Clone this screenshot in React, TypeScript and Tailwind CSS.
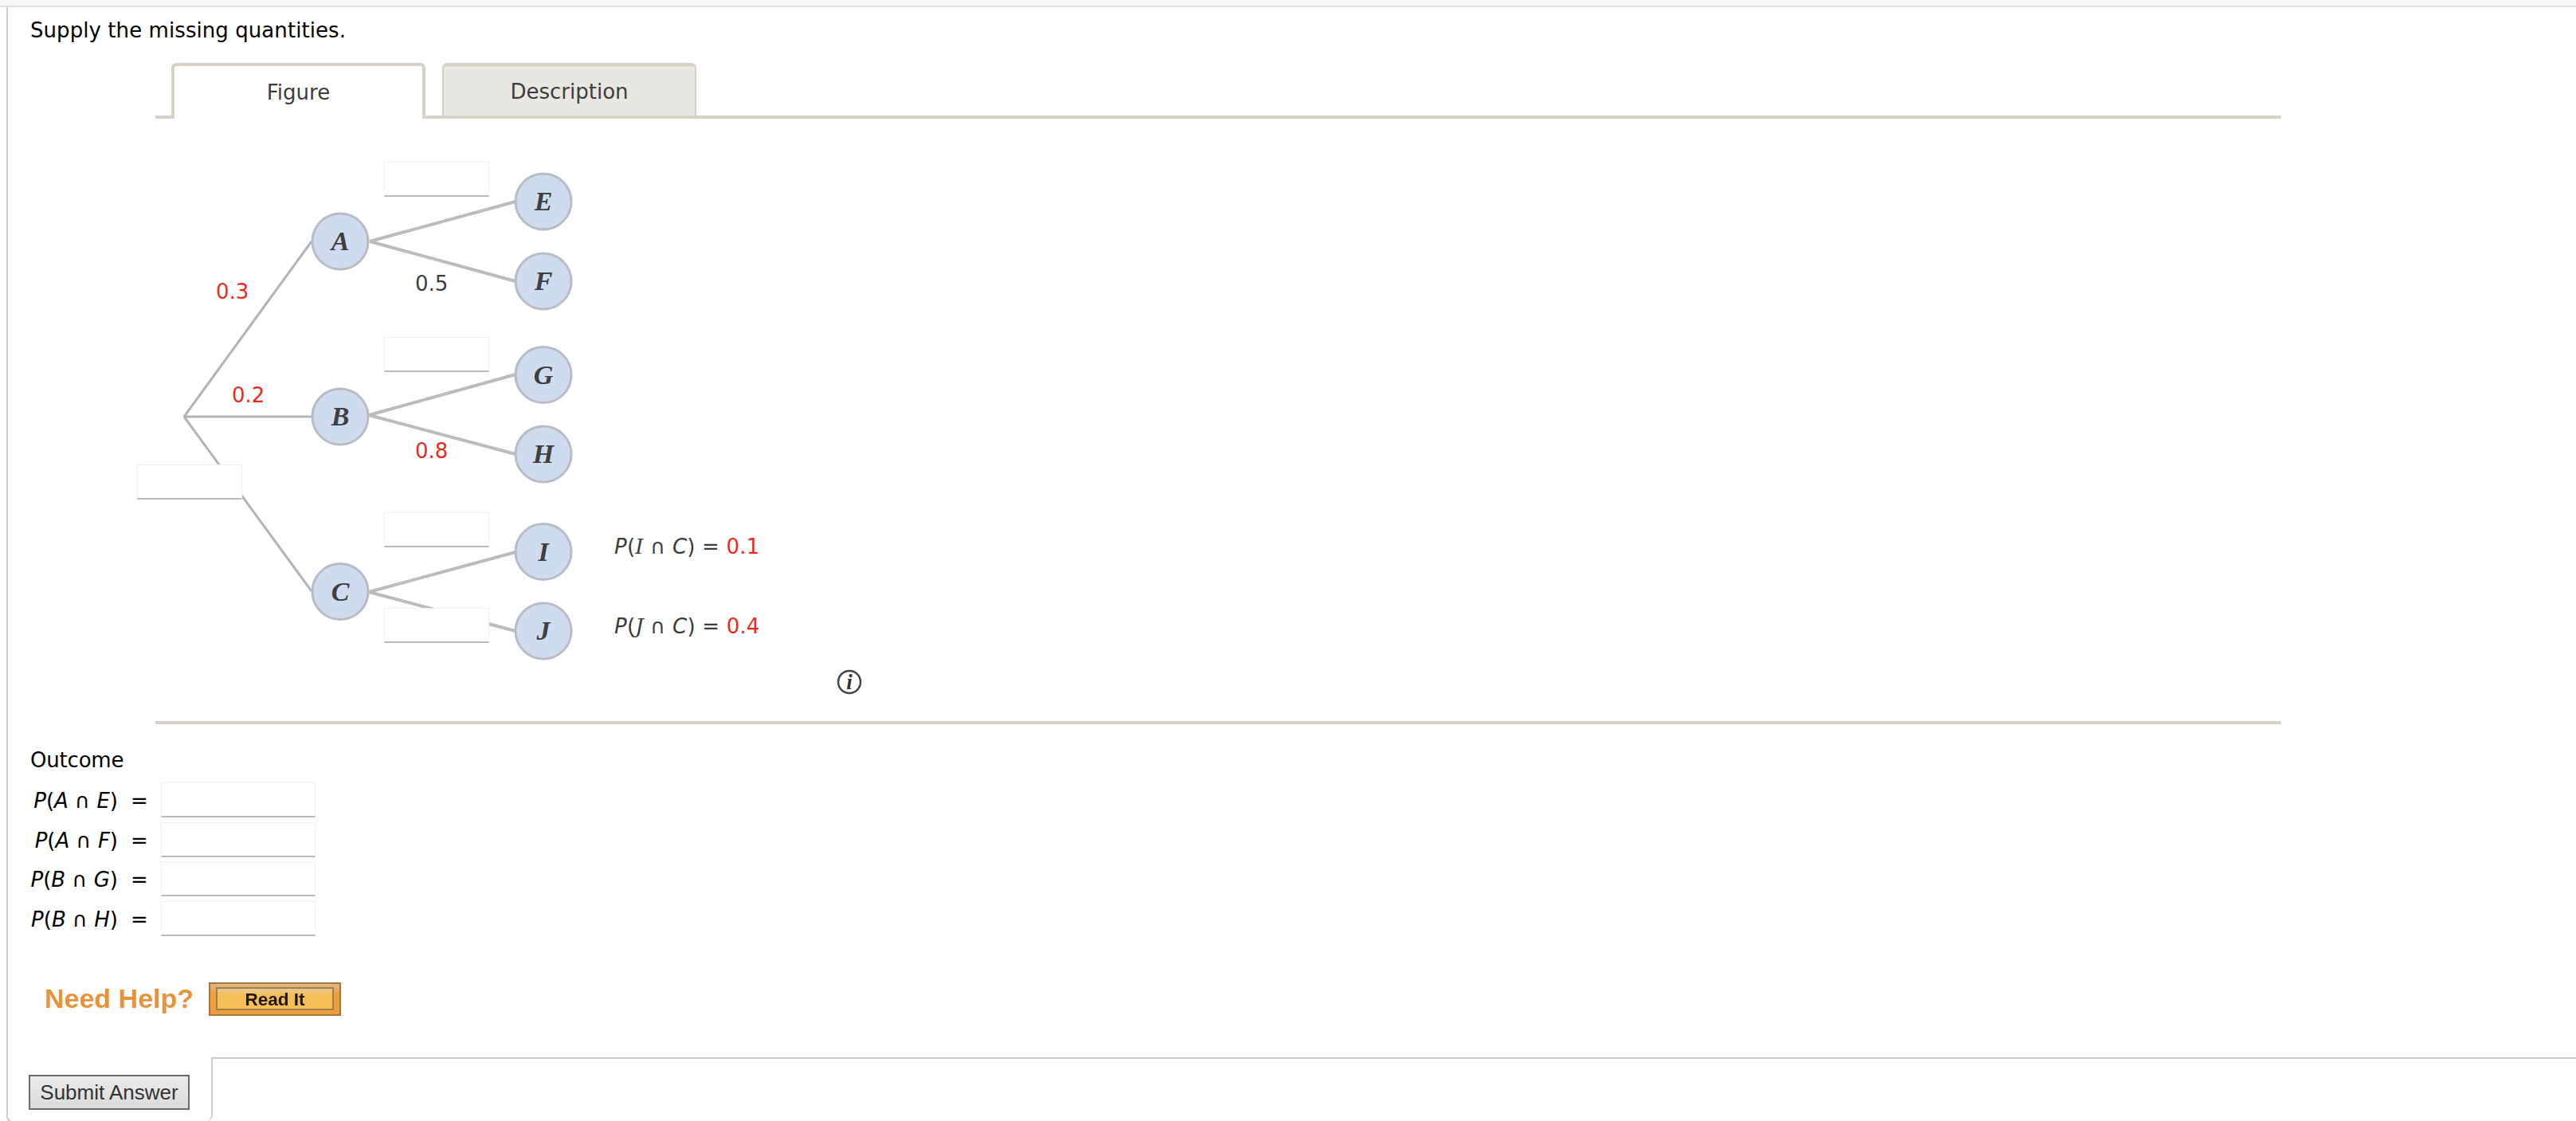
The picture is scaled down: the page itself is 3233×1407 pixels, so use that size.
import React from "react";

const inputCls =
  "absolute w-[132px] h-[44px] bg-white border border-[#f0f0f0] border-b-2 border-b-[#bbbbbb]";

const nodes: [string, number, number][] = [
  ["A", 427, 303],
  ["E", 682, 253],
  ["F", 682, 353],
  ["B", 427, 523],
  ["G", 682, 470.5],
  ["H", 682, 570],
  ["C", 427, 742.5],
  ["I", 682, 692.5],
  ["J", 682, 792],
];

const trunk: [number, number][] = [
  [391, 303],
  [391, 523],
  [391, 742],
];

const branches: [number, number, number, number][] = [
  [464, 303, 647, 253],
  [464, 303, 647, 353],
  [463, 521, 647, 470],
  [463, 521, 647, 570],
  [463, 743, 647, 693],
  [463, 743, 647, 792],
];

function Tree() {
  return (
    <svg
      className="absolute left-0 top-0 w-[1000px] h-[756px]"
      viewBox="195 149 1000 756"
    >
      {trunk.map(([x, y]) => (
        <line key={y} x1={231} y1={523} x2={x} y2={y} stroke="#b4b4b4" strokeWidth={3} />
      ))}
      {branches.map(([a, b, c, d], i) => (
        <line key={i} x1={a} y1={b} x2={c} y2={d} stroke="#bcbcbc" strokeWidth={4} />
      ))}
      {nodes.map(([t, x, y]) => (
        <g key={t}>
          <circle cx={x} cy={y} r={35} fill="#cfdcef" stroke="#b8bcc4" strokeWidth={3} />
          <text
            x={x}
            y={y + 11}
            textAnchor="middle"
            fontFamily="'Liberation Serif', serif"
            fontWeight="bold"
            fontStyle="italic"
            fontSize={34}
            fill="#3f3f3f"
          >
            {t}
          </text>
        </g>
      ))}
      <circle cx={1066} cy={856} r={14} fill="none" stroke="#444444" strokeWidth={2.5} />
      <text
        x={1066}
        y={865}
        textAnchor="middle"
        fontFamily="'Liberation Serif', serif"
        fontWeight="bold"
        fontStyle="italic"
        fontSize={27}
        fill="#333333"
      >
        i
      </text>
    </svg>
  );
}

function Joint({ a, b, red }: { a: string; b: string; red: string }) {
  return (
    <>
      <i>P</i>(<i className="font-['DejaVu_Serif',serif]">{a}</i> ∩ <i>{b}</i>) ={" "}
      <span className="text-[#ee2a1c]">{red}</span>
    </>
  );
}

function Row({ a, b }: { a: string; b: string }) {
  return (
    <div className="flex h-[44px] leading-[46px] text-black">
      <div className="w-[138px] text-right whitespace-pre">
        <i>P</i>(<i>{a}</i> ∩ <i>{b}</i>)
      </div>
      <div className="w-[38px] ml-[16px]">=</div>
      <input
        aria-label={`P(${a} ∩ ${b})`}
        className="w-[194px] h-[44px] bg-white border border-[#f0f0f0] border-b-2 border-b-[#bbbbbb]"
      />
    </div>
  );
}

export default function App() {
  return (
    <div className="w-[3233px] h-[1407px] overflow-hidden bg-white font-['DejaVu_Sans',sans-serif] text-[26px]">
      <div className="h-[9px] bg-[#f7f7f7] border-b-2 border-[#e0e0e0]" />
      <div className="ml-[8px] h-[1400px] border-l-2 border-b-2 border-[#cccccc] rounded-bl-[8px]">
        <div className="pt-[11px] pl-[28px] leading-[36px] text-black tracking-[0.07px]">
          Supply the missing quantities.
        </div>

        <div className="mt-[23px] ml-[185px] w-[2668px] h-[70px] border-b-4 border-[#d6d2c8] flex items-start pl-[20px] gap-[21px] text-[#3d3d3d]">
          <div className="w-[319px] h-[70px] bg-white border-x-4 border-t-4 border-[#d6d2c8] rounded-t-[6px] text-center pt-[1px] leading-[64px]">
            Figure
          </div>
          <div className="w-[319px] h-[66px] bg-[#e8e7e2] border-x-2 border-t-4 border-[#d6d2c8] rounded-t-[6px] text-center pt-[2px] leading-[60px]">
            Description
          </div>
        </div>

        <div className="relative ml-[185px] w-[2668px] h-[760px] border-b-4 border-[#d6d2c8] leading-[36px] text-[#3d3d3d]">
          <Tree />
          <input aria-label="A E" className={`${inputCls} left-[287px] top-[54px]`} />
          <input aria-label="B G" className={`${inputCls} left-[287px] top-[274px]`} />
          <input aria-label="C" className={`${inputCls} left-[-23px] top-[434px]`} />
          <input aria-label="C I" className={`${inputCls} left-[287px] top-[494px]`} />
          <input aria-label="C J" className={`${inputCls} left-[287px] top-[614px]`} />
          <div className="absolute left-[76px] top-[199px] text-[#ee2a1c]">0.3</div>
          <div className="absolute left-[326px] top-[189px]">0.5</div>
          <div className="absolute left-[96px] top-[329px] text-[#ee2a1c]">0.2</div>
          <div className="absolute left-[326px] top-[399px] text-[#ee2a1c]">0.8</div>
          <div className="absolute left-[576px] top-[519px] whitespace-pre tracking-[0.2px]">
            <Joint a="I" b="C" red="0.1" />
          </div>
          <div className="absolute left-[576px] top-[619px] whitespace-pre tracking-[0.2px]">
            <Joint a="J" b="C" red="0.4" />
          </div>
        </div>

        <div className="mt-[27px] pl-[28px] leading-[36px] text-black tracking-[-0.2px]">Outcome</div>
        <div className="mt-[10px] flex flex-col gap-[5.7px]">
          <Row a="A" b="E" />
          <Row a="A" b="F" />
          <Row a="B" b="G" />
          <Row a="B" b="H" />
        </div>

        <div className="mt-[58px] h-[42px] flex items-start pl-[46px] font-['Liberation_Sans',sans-serif]">
          <div className="w-[206px] text-[34px] font-bold leading-[40px] text-[#e8923a] whitespace-nowrap blur-[0.4px]">
            Need Help?
          </div>
          <div className="w-[166px] h-[42px] border-2 border-[#a87838] bg-linear-to-b from-[#dcb98c] via-[#ec9f44] via-30% to-[#eb9d40] pl-[7px] pt-[4px]">
            <div className="w-[148px] h-[29px] border-2 border-[#a5803f] bg-linear-to-b from-[#e4c99a] to-[#f4bf59] to-30% text-center text-[22.5px] font-bold leading-[27px] text-[#1f1808] blur-[0.4px]">
              Read It
            </div>
          </div>
        </div>

        <div className="mt-[52px] h-[80px] flex font-['Liberation_Sans',sans-serif]">
          <div className="w-[257px] h-[80px] border-r-2 border-[#cccccc] rounded-br-[8px] pl-[26px] pt-[22px]">
            <button className="w-[202px] h-[44px] border-2 border-[#6b6b6b] bg-linear-to-b from-[#ebebeb] to-[#dbdbdb] text-[26px] leading-[38px] text-[#333333] text-center">
              Submit Answer
            </button>
          </div>
          <div className="flex-1 border-t-2 border-[#cccccc]" />
        </div>
      </div>
    </div>
  );
}
